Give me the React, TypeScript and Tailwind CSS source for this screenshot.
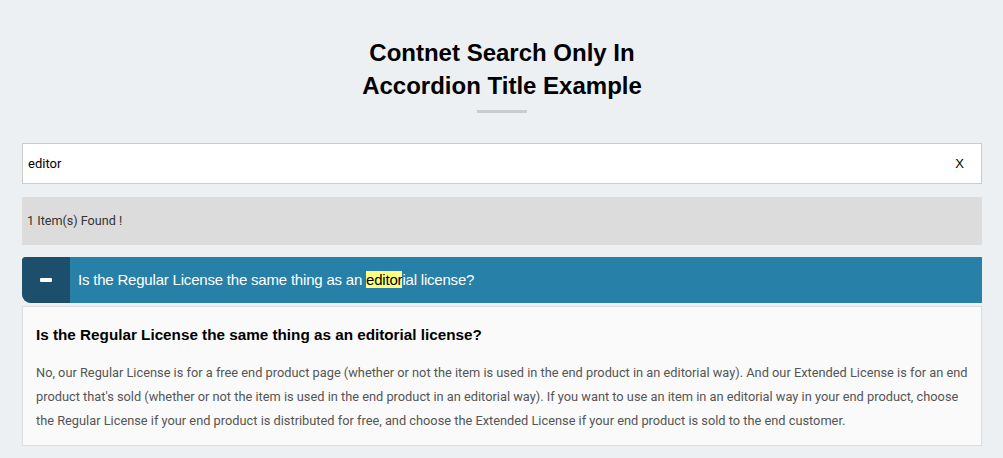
export default function App() {
  return (
    <div className="min-h-screen w-full bg-[#edf0f3] pt-[36px] pb-[12px]">
      <main className="mx-[22px] mr-[21px] flex flex-col">
        <h1 className="text-center font-['Liberation_Sans',Arial,sans-serif] text-[24px] font-bold leading-[33px] text-black">
          Contnet Search Only In
          <br />
          Accordion Title Example
        </h1>
        <div className="mx-auto mt-[8px] h-[3px] w-[50px] bg-[#cccccc]" />

        <div className="mt-[30px] flex h-[41px] items-center justify-between border border-[#cccccc] bg-white pl-[5px] pr-[17px] font-['Roboto',sans-serif] text-[13px] text-black">
          <span>editor</span>
          <span className="font-['Liberation_Sans',Arial,sans-serif] text-[13px]">X</span>
        </div>

        <div className="mt-[13px] flex h-[48px] items-center bg-[#dcdcdc] px-[5px] font-['Roboto',sans-serif] text-[12.6px] text-[#333333]">
          1 Item(s) Found !
        </div>

        <div className="mt-[12px] flex h-[46px] items-stretch rounded-tl-[4px] rounded-bl-[9px] bg-[#2680a8]">
          <div className="flex w-[48px] items-center justify-center rounded-tl-[4px] rounded-bl-[9px] bg-[#1b4f6b]">
            <span className="block h-[4px] w-[12px] rounded-[1px] bg-white" />
          </div>
          <div className="flex items-center pl-[8px] font-['Liberation_Sans',Arial,sans-serif] text-[15px] tracking-[-0.2px] text-white">
            <span>
              Is the Regular License the same thing as an{" "}
              <mark className="bg-[#ffff80] text-black">editor</mark>ial license?
            </span>
          </div>
        </div>

        <div className="mt-[3px] border border-[#dddddd] bg-[#fafafa] px-[13px] pt-[17px] pb-[12px]">
          <h2 className="font-['Liberation_Sans',Arial,sans-serif] text-[15.25px] font-bold leading-[22px] text-black">
            Is the Regular License the same thing as an editorial license?
          </h2>
          <p className="mt-[15px] font-['Roboto',sans-serif] text-[12.8px] leading-[24px] text-[#555555]">
            No, our Regular License is for a free end product page (whether or not the item is used in the end product in an editorial way). And our Extended License is for an end product that's sold (whether or not the item is used in the end product in an editorial way). If you want to use an item in an editorial way in your end product, choose the Regular License if your end product is distributed for free, and choose the Extended License if your end product is sold to the end customer.
          </p>
        </div>
      </main>
    </div>
  );
}
